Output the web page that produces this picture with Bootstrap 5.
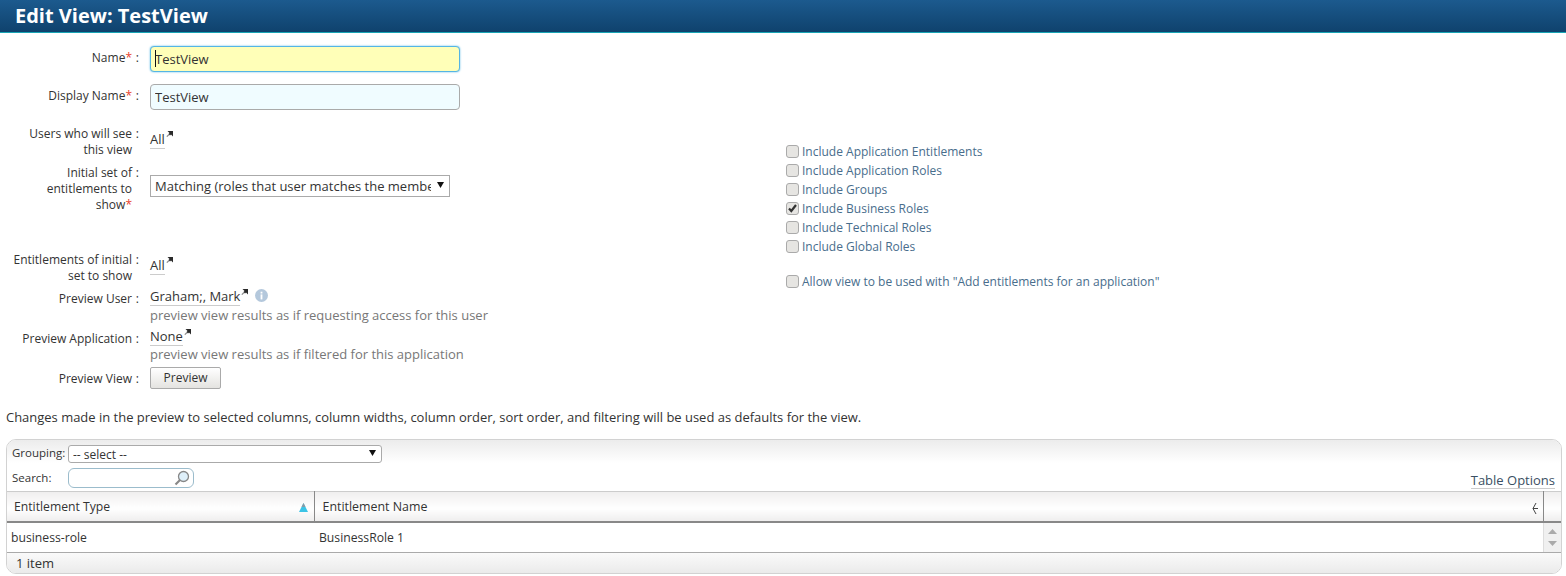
<!DOCTYPE html>
<html lang="en">
<head>
<meta charset="utf-8">
<title>Edit View</title>
<link href="https://cdn.jsdelivr.net/npm/bootstrap@5.3.0/dist/css/bootstrap.min.css" rel="stylesheet">
<style>
html,body{height:576px;overflow:hidden}
body{font-family:"Open Sans",sans-serif;font-size:12px;line-height:16px;color:#333;background:#fff}
.hdr{height:33px;background:linear-gradient(#1c5a8e,#0f426d);border-bottom:1px solid #19a5b5;color:#fff;font-size:20px;font-weight:700;line-height:32px;padding-left:15px}
.lbl{width:139px;flex:none;display:flex;justify-content:flex-end;text-align:right}
.lbl-txt{width:120px}
.colon{width:7px;flex:none;text-align:right}
.req{color:#e8412c}
.val{margin-left:11px;font-size:13px}
.input-box{position:relative;width:310px}
.txt-in{display:block;width:310px;height:26px;padding:0 4px;border:1px solid #aaa;border-radius:4px;font-size:13px;color:#333;outline:0}
.txt-in.act{background:#ffffb8;border-color:#55b5e5;box-shadow:0 0 2px #55b5e5}
.txt-in.plain{background:#f0fcff}
.caret-bar{position:absolute;left:5px;top:4px;width:1px;height:17px;background:#111}
.lnk{color:#333;border-bottom:1px solid #ccc;display:inline-block;line-height:18px;height:19px;text-decoration:none}
.hint{color:#777;line-height:18px}
.sel{appearance:none;display:block;width:300px;height:22px;border:1px solid #aaa;border-radius:0;background-color:#fff;padding:0 18px 0 4px;font-size:13px;color:#333;outline:0}
.sel-wrap{position:relative;display:inline-block}
.tri{position:absolute;width:7px;height:6px;pointer-events:none}
.prev{height:22px;width:71px;padding:0;border:1px solid #aaa;border-radius:2px;background:linear-gradient(#fff,#e4e3e0);font-size:12px;color:#333}
.cks{padding-top:109px;color:#486d8c}
.ck-line{height:19px;display:flex;align-items:center;gap:3px}
input.box{appearance:none;width:13px;height:13px;border:1px solid #aaa;border-radius:3px;background:#e6e5e2;margin:0;flex:none}
.box-wrap{position:relative;width:13px;height:13px;flex:none;display:block}
.box-wrap svg{position:absolute;left:1px;top:1px}
.note{margin:12px 0 14px 6px;height:16px;font-size:12.97px}
.panel{margin:0 4px 0 6px;height:135px;border:1px solid #d2d2d2;border-radius:10px;overflow:hidden;background:#fff}
.bar{height:51px;background:linear-gradient(#ececec,#fff 45%);position:relative;font-size:11.5px}
.bar-row{display:flex;align-items:center;padding-left:5px}
.bar-lab{width:56px;flex:none}
.sel2{appearance:none;width:314px;height:18px;border:1px solid #aaa;border-radius:3px;background:#fff;padding:2px 4px 0;font-size:12px;line-height:14px;color:#333;outline:0}
.srch{width:126px;height:20px;border:1px solid #9bbccc;border-radius:6px;background:#fff;position:relative}
.srch svg{position:absolute;right:3px;top:1px}
.opts{position:absolute;right:6px;bottom:2px;font-size:13px;line-height:16px;color:#3a4f63;border-bottom:1px solid #ccc}
.grid-tb{width:100%;table-layout:fixed;border-collapse:collapse;margin:0;font-size:12.2px}
.grid-tb th{height:30px;font-weight:400;padding:2px 0 0 7px;background:linear-gradient(#f0efef,#fff 55%,#eeeded);border-top:1px solid #ccc;border-bottom:2px solid #888;border-right:1px solid #888;position:relative;font-size:12.2px}
.grid-tb th.second{padding-left:8px;font-size:12.4px}
.grid-tb th:last-child{border-right:0;padding:0}
.grid-tb td{height:31px;padding:2px 0 0 4px;border-bottom:1px solid #aaa;vertical-align:middle}
.grid-tb td.second{padding-left:5px}
.sb{background:#f0f0f0;padding:0!important;border-left:1px solid #ddd}
.sb-in{display:flex;flex-direction:column;align-items:center;gap:7px}
.foot{height:22px;background:linear-gradient(#fafafa,#e9e9e9);padding-left:9px;line-height:21px;font-size:13px}
.h-ico{position:absolute;top:11px}
</style>
</head>
<body>
<svg width="0" height="0" class="d-block" aria-hidden="true"><defs><g id="pop"><path d="M7 0V5.500L5 3.500 4 4.500 2.500 3 3.500 2 1.500 0Z" fill="#2a2a2a"/><path d="M3 3.500 0.800 5.700" stroke="#8a8a8a" stroke-width="1.200" fill="none"/></g></defs></svg>
<div class="hdr">Edit View: TestView</div>
<div class="d-flex">
  <div style="width:786px" class="flex-none">
    <div class="d-flex" style="margin-top:13px;height:26px">
      <div class="lbl" style="padding-top:4px"><div class="lbl-txt">Name<span class="req">*</span></div><div class="colon">:</div></div>
      <div class="val"><div class="input-box"><input class="txt-in act" value="TestView" readonly><span class="caret-bar"></span></div></div>
    </div>
    <div class="d-flex" style="margin-top:12px;height:26px">
      <div class="lbl" style="padding-top:4px"><div class="lbl-txt">Display Name<span class="req">*</span></div><div class="colon">:</div></div>
      <div class="val"><input class="txt-in plain" value="TestView" readonly></div>
    </div>
    <div class="d-flex" style="margin-top:16px;height:38px">
      <div class="lbl"><div class="lbl-txt">Users who will see this view</div><div class="colon">:</div></div>
      <div class="val"><a class="lnk" style="margin-top:4px" href="#">All</a><svg width="7" height="7" viewBox="0 0 7 7" class="align-top" style="margin:5px 0 0 1px"><use href="#pop"/></svg></div>
    </div>
    <div class="d-flex" style="height:85px;padding-top:1px">
      <div class="lbl"><div class="lbl-txt">Initial set of entitlements to show<span class="req">*</span></div><div class="colon">:</div></div>
      <div class="val"><div class="sel-wrap" style="margin-top:10px"><select class="sel"><option>Matching (roles that user matches the membership rule of)</option></select><svg class="tri" style="right:6px;top:7px" viewBox="0 0 7 6"><path d="M0 0h7L3.500 6Z" fill="#111"/></svg></div></div>
    </div>
    <div class="d-flex" style="height:38px;padding-top:3px">
      <div class="lbl"><div class="lbl-txt">Entitlements of initial set to show</div><div class="colon">:</div></div>
      <div class="val"><a class="lnk" style="margin-top:4px" href="#">All</a><svg width="7" height="7" viewBox="0 0 7 7" class="align-top" style="margin:5px 0 0 1px"><use href="#pop"/></svg></div>
    </div>
    <div class="d-flex" style="height:41px">
      <div class="lbl" style="padding-top:4px"><div class="lbl-txt">Preview User</div><div class="colon">:</div></div>
      <div class="val"><div class="d-flex align-items-start"><a class="lnk" href="#">Graham;, Mark</a><svg width="7" height="7" viewBox="0 0 7 7" style="margin:2px 0 0 1px"><use href="#pop"/></svg><svg width="13" height="13" viewBox="0 0 13 13" style="margin:2px 0 0 7px"><circle cx="6.500" cy="6.500" r="6.500" fill="#b4c8dc"/><rect x="5.600" y="5.400" width="1.800" height="5" fill="#fff"/><rect x="5.600" y="2.700" width="1.800" height="1.800" fill="#fff"/></svg></div><div class="hint">preview view results as if requesting access for this user</div></div>
    </div>
    <div class="d-flex" style="height:39px">
      <div class="lbl" style="padding-top:3px"><div class="lbl-txt">Preview Application</div><div class="colon">:</div></div>
      <div class="val" style="margin-top:-1px"><div class="d-flex align-items-start"><a class="lnk" href="#">None</a><svg width="7" height="7" viewBox="0 0 7 7" style="margin:2px 0 0 1px"><use href="#pop"/></svg></div><div class="hint" style="margin-top:-1px">preview view results as if filtered for this application</div></div>
    </div>
    <div class="d-flex" style="height:30px">
      <div class="lbl" style="padding-top:4px"><div class="lbl-txt">Preview View</div><div class="colon">:</div></div>
      <div class="val"><button type="button" class="prev">Preview</button></div>
    </div>
  </div>
  <div class="cks">
    <div class="ck-line"><input type="checkbox" class="box" disabled><span>Include Application Entitlements</span></div>
    <div class="ck-line"><input type="checkbox" class="box" disabled><span>Include Application Roles</span></div>
    <div class="ck-line"><input type="checkbox" class="box" disabled><span>Include Groups</span></div>
    <div class="ck-line"><span class="box-wrap"><input type="checkbox" class="box d-block" disabled checked><svg width="11" height="11" viewBox="0 0 11 11"><path d="M2 5.500 4.300 8 9 2" fill="none" stroke="#333" stroke-width="2.200"/></svg></span><span>Include Business Roles</span></div>
    <div class="ck-line"><input type="checkbox" class="box" disabled><span>Include Technical Roles</span></div>
    <div class="ck-line"><input type="checkbox" class="box" disabled><span>Include Global Roles</span></div>
    <div class="ck-line" style="margin-top:16px"><input type="checkbox" class="box" disabled><span>Allow view to be used with "Add entitlements for an application"</span></div>
  </div>
</div>
<div class="note">Changes made in the preview to selected columns, column widths, column order, sort order, and filtering will be used as defaults for the view.</div>
<div class="panel">
  <div class="bar">
    <div class="bar-row" style="padding-top:5px"><div class="bar-lab" style="margin-top:-2px">Grouping:</div><div class="sel-wrap"><select class="sel2 d-block"><option>-- select --</option></select><svg class="tri" style="right:6px;top:5px" viewBox="0 0 7 6"><path d="M0 0h7L3.500 6Z" fill="#111"/></svg></div></div>
    <div class="bar-row" style="margin-top:5px"><div class="bar-lab">Search:</div><div class="srch"><svg width="16" height="16" viewBox="0 0 16 16"><circle cx="9.500" cy="6.500" r="5" fill="#dff0fa" stroke="#888" stroke-width="1.300"/><path d="M6 10 1.500 14.500" stroke="#888" stroke-width="2.200"/></svg></div></div>
    <a class="opts text-decoration-none" href="#">Table Options</a>
  </div>
  <table class="grid-tb">
    <colgroup><col style="width:307px"><col><col style="width:18px"></colgroup>
    <thead><tr>
      <th>Entitlement Type<svg class="h-ico" style="right:6px" width="9" height="9" viewBox="0 0 9 9"><path d="M4.500 0 9 9H0Z" fill="#3cc4e6"/><path d="M4.500 0 6.500 4H2.500Z" fill="#8a9aa5"/></svg></th>
      <th class="second">Entitlement Name<svg class="h-ico" style="right:5px" width="6" height="11" viewBox="0 0 6 11"><path d="M4 0 1 5.500 4 11M1 5.500h5" fill="none" stroke="#444"/></svg></th>
      <th></th>
    </tr></thead>
    <tbody><tr>
      <td>business-role</td><td class="second">BusinessRole 1</td>
      <td class="sb"><div class="sb-in"><svg width="9" height="5" viewBox="0 0 9 5"><path d="M4.500 0 9 5H0Z" fill="#aaa"/></svg><svg width="9" height="5" viewBox="0 0 9 5"><path d="M0 0h9L4.500 5Z" fill="#aaa"/></svg></div></td>
    </tr></tbody>
  </table>
  <div class="foot">1 item</div>
</div>
</body>
</html>
